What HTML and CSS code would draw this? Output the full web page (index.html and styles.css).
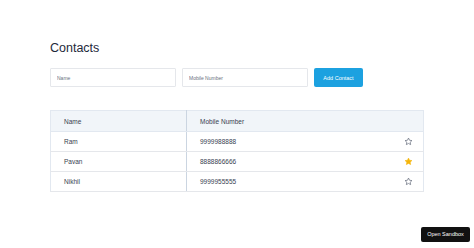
FILE: index.html
```html
<!DOCTYPE html>
<html>
<head>
  <title>Contacts</title>
  <link rel="stylesheet" href="styles.css">
</head>
<body>
  <div class="page">
    <h1>Contacts</h1>

    <div class="add-form">
      <input type="text" class="field" placeholder="Name">
      <input type="text" class="field" placeholder="Mobile Number">
      <button class="add-btn">Add Contact</button>
    </div>

    <table class="contacts">
      <thead>
        <tr>
          <th class="col-name">Name</th>
          <th colspan="2">Mobile Number</th>
        </tr>
      </thead>
      <tbody>
        <tr>
          <td class="col-name">Ram</td>
          <td>9999988888</td>
          <td class="col-star">
            <svg class="star" viewBox="0 0 24 24"><path d="M12 2.8l2.8 5.9 6.4.8-4.7 4.4 1.2 6.4L12 17.2l-5.7 3.1 1.2-6.4-4.7-4.4 6.4-.8z" fill="none" stroke="#6b7280" stroke-width="2" stroke-linejoin="round"/></svg>
          </td>
        </tr>
        <tr>
          <td class="col-name">Pavan</td>
          <td>8888866666</td>
          <td class="col-star">
            <svg class="star" viewBox="0 0 24 24"><path d="M12 2.8l2.8 5.9 6.4.8-4.7 4.4 1.2 6.4L12 17.2l-5.7 3.1 1.2-6.4-4.7-4.4 6.4-.8z" fill="#f5b50a" stroke="#f5b50a" stroke-width="1.5" stroke-linejoin="round"/></svg>
          </td>
        </tr>
        <tr>
          <td class="col-name">Nikhil</td>
          <td>9999955555</td>
          <td class="col-star">
            <svg class="star" viewBox="0 0 24 24"><path d="M12 2.8l2.8 5.9 6.4.8-4.7 4.4 1.2 6.4L12 17.2l-5.7 3.1 1.2-6.4-4.7-4.4 6.4-.8z" fill="none" stroke="#6b7280" stroke-width="2" stroke-linejoin="round"/></svg>
          </td>
        </tr>
      </tbody>
    </table>
  </div>

  <a class="sandbox-btn">Open Sandbox</a>
</body>
</html>
```

FILE: styles.css
```css
body {
  margin: 0;
  font-family: "Liberation Sans", Arial, sans-serif;
  background-color: #ffffff;
  color: #1f2937;
}

.page {
  padding: 41px 50px 0 50px;
  width: 374px;
}

h1 {
  margin: 0 0 13px 0;
  font-size: 12.5px;
  font-weight: normal;
  color: #1e293b;
  line-height: 14px;
}

.add-form {
  display: flex;
  gap: 6px;
  margin-bottom: 23px;
}

.field {
  width: 126px;
  height: 19px;
  box-sizing: border-box;
  border: 1px solid #e5e7eb;
  border-radius: 1px;
  padding: 0 6px;
  font-family: inherit;
  font-size: 5px;
  color: #374151;
}

.field::placeholder {
  color: #6b7280;
}

.add-btn {
  width: 49px;
  height: 19px;
  border: none;
  border-radius: 2px;
  background-color: #1ca1e0;
  color: #ffffff;
  font-family: inherit;
  font-size: 5.5px;
  padding: 0;
}

.contacts {
  width: 374px;
  border-collapse: collapse;
  border: 1px solid #e2e8f0;
  font-size: 6.5px;
  color: #374151;
}

.contacts th {
  background-color: #f1f5f9;
  font-weight: normal;
  text-align: left;
  height: 20px;
  padding: 0 0 0 13px;
  border-bottom: 1px solid #e2e8f0;
}

.contacts td {
  height: 19px;
  padding: 0 0 0 13px;
  border-bottom: 1px solid #e5e7eb;
}

.contacts .col-name {
  width: 122px;
  border-right: 1px solid #cbd5e1;
}

.contacts .col-star {
  width: 16px;
  padding: 0 10px 0 0;
  text-align: right;
}

.star {
  width: 9px;
  height: 9px;
  display: block;
  margin-left: auto;
}

.sandbox-btn {
  position: absolute;
  left: 421px;
  top: 227px;
  width: 49px;
  height: 15px;
  background-color: #111111;
  color: #ffffff;
  font-size: 5.5px;
  line-height: 15px;
  text-align: center;
  border-radius: 2px;
}
```
